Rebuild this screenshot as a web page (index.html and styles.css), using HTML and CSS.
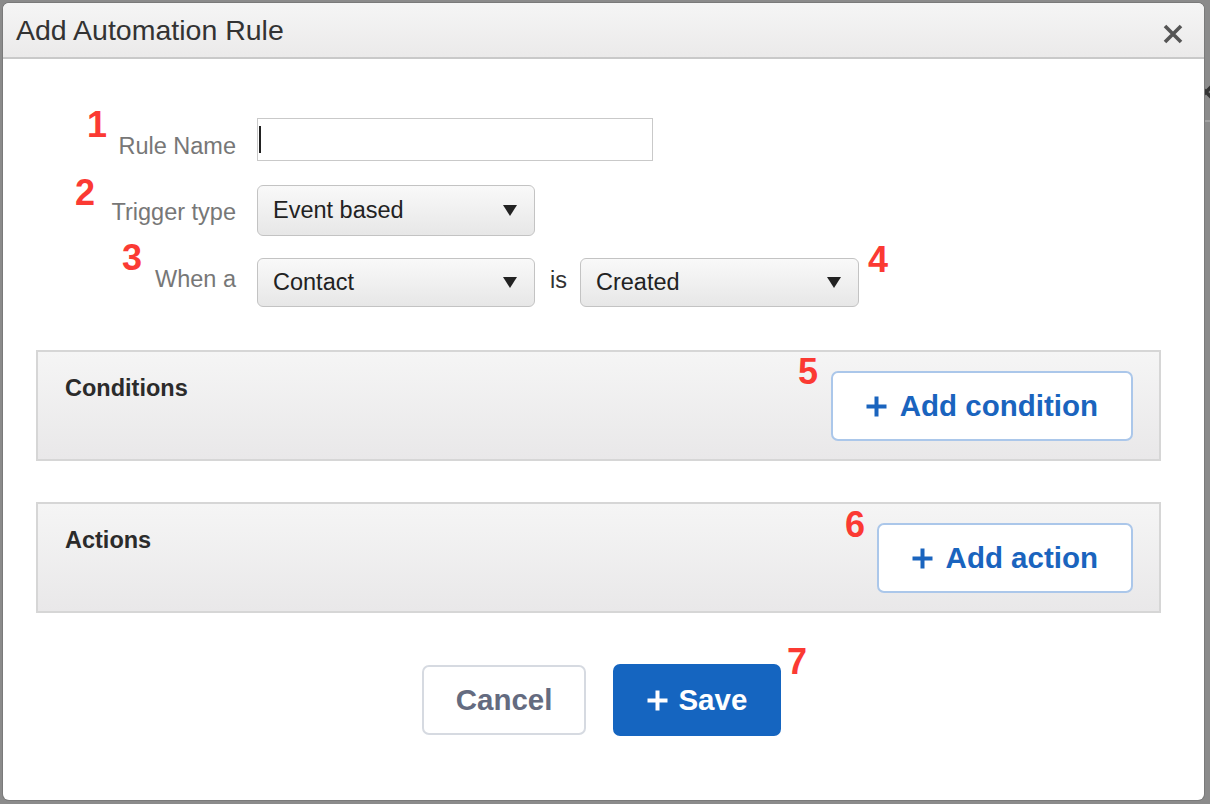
FILE: index.html
```html
<!DOCTYPE html>
<html>
<head>
	<meta charset="UTF-8">
	<title>Add Automation Rule</title>
	<link rel="stylesheet" href="styles.css">
</head>
<body>
<div class="backdrop">
	<svg class="backdrop-close" width="20" height="20" viewBox="0 0 20 20"><path d="M3 3L17 17M17 3L3 17" stroke="#333" stroke-width="3.5"/></svg>
	<div class="backdrop-line"></div>
</div>

<div class="modal">
	<div class="modal-header">
		<h2 class="modal-title">Add Automation Rule</h2>
		<svg class="modal-close" width="20" height="20" viewBox="0 0 20 20"><path d="M2 2L18 18M18 2L2 18" stroke="#555" stroke-width="3.6"/></svg>
	</div>

	<div class="modal-body">
		<div class="rule-form">
			<label class="field-label row-name">Rule Name</label>
			<div class="text-input"><span class="caret"></span></div>

			<label class="field-label row-trigger">Trigger type</label>
			<div class="select select-trigger"><span>Event based</span><i class="arrow"></i></div>

			<label class="field-label row-when">When a</label>
			<div class="when-row">
				<div class="select select-object"><span>Contact</span><i class="arrow"></i></div>
				<span class="is">is</span>
				<div class="select select-event"><span>Created</span><i class="arrow"></i></div>
			</div>
		</div>

		<div class="panel">
			<div class="panel-title">Conditions</div>
			<button class="btn btn-outline"><svg class="plus" width="21" height="21" viewBox="0 0 21 21"><path d="M10.5 0.5V20.5M0.5 10.5H20.5" stroke="currentColor" stroke-width="4"/></svg>Add condition</button>
		</div>

		<div class="panel">
			<div class="panel-title">Actions</div>
			<button class="btn btn-outline"><svg class="plus" width="21" height="21" viewBox="0 0 21 21"><path d="M10.5 0.5V20.5M0.5 10.5H20.5" stroke="currentColor" stroke-width="4"/></svg>Add action</button>
		</div>

		<div class="modal-footer">
			<button class="btn btn-cancel">Cancel</button>
			<button class="btn btn-save"><svg class="plus" width="21" height="21" viewBox="0 0 21 21"><path d="M10.5 0.5V20.5M0.5 10.5H20.5" stroke="currentColor" stroke-width="4"/></svg>Save</button>
		</div>
	</div>

	<!-- annotation numbers -->
	<span class="mark mark1">1</span>
	<span class="mark mark2">2</span>
	<span class="mark mark3">3</span>
	<span class="mark mark4">4</span>
	<span class="mark mark5">5</span>
	<span class="mark mark6">6</span>
	<span class="mark mark7">7</span>
</div>
</body>
</html>
```

FILE: styles.css
```css
*{margin: 0;padding: 0;box-sizing: border-box;}
body{background: #8b8b8b;font-family: "Liberation Sans", Arial, sans-serif;width: 1210px;height: 804px;overflow: hidden;position: relative;}

.backdrop-close{position: absolute;left: 1196px;top: 82px;}
.backdrop-line{position: absolute;left: 1200px;top: 120px;width: 10px;height: 2px;background: #a2a2a2;}

.modal{position: relative;z-index: 1;margin: 3px 0 0 3px;width: 1201px;height: 797px;background: #fff;border-radius: 6px;overflow: hidden;box-shadow: 0 0 0 1px #7a7a7a;}

.modal-header{height: 56px;display: flex;align-items: center;justify-content: space-between;padding: 0 21px 0 13px;background: linear-gradient(#f5f5f5, #ebeaea);border-bottom: 2px solid #c9c9c9;}
.modal-title{font-size: 28.5px;line-height: 1;font-weight: 400;color: #333;}
.modal-close{margin-top: 7px;}

.modal-body{padding-top: 59px;}

.rule-form{display: grid;grid-template-columns: 233px auto;column-gap: 21px;align-items: start;justify-content: start;}
.field-label{font-size: 23.5px;line-height: 23.5px;color: #777;text-align: right;}
.row-name{padding-top: 17px;}
.row-trigger{padding-top: 16px;margin-top: 24px;}
.row-when{padding-top: 10px;margin-top: 22px;}

.text-input{width: 396px;height: 43px;border: 1px solid #c9c9c9;display: flex;align-items: center;}
.caret{width: 2px;height: 27px;background: #222;margin-left: 1px;}

.select{display: flex;align-items: center;justify-content: space-between;padding: 0 17px 0 15px;border: 1px solid #c3c3c3;border-radius: 6px;background: linear-gradient(#f9f9f9, #e7e7e7);font-size: 23.5px;color: #222;}
.select-trigger{width: 278px;height: 51px;margin-top: 24px;}
.when-row{display: flex;align-items: center;margin-top: 22px;}
.select-object{width: 278px;height: 49px;}
.select-event{width: 279px;height: 49px;}
.is{font-size: 23.5px;color: #333;margin: 0 13px 0 15px;position: relative;top: -2px;}
.arrow{width: 0;height: 0;border-left: 7.5px solid transparent;border-right: 7.5px solid transparent;border-top: 11px solid #222;}

.panel{margin: 43px 43px 0 33px;display: flex;justify-content: space-between;align-items: flex-start;padding: 19px 26px 18px 27px;border: 2px solid #d6d6d6;background: linear-gradient(#f5f5f5, #e9e8e9);}
.panel + .panel{margin-top: 41px;}
.panel-title{margin-top: 6px;font-size: 23.5px;line-height: 1;font-weight: 700;color: #2b2b2b;}

.btn{display: flex;align-items: center;height: 70px;padding: 0 33px;border: 2px solid transparent;border-radius: 7px;font-family: "Liberation Sans", Arial, sans-serif;font-size: 29.5px;line-height: 1;font-weight: 700;background: #fff;cursor: pointer;}
.plus{margin-right: 13px;flex: none;}
.btn-outline{border-color: #abc7ea;color: #1a64be;}

.modal-footer{display: flex;justify-content: center;align-items: center;gap: 27px;margin-top: 51px;padding-right: 4px;}
.btn-cancel{padding: 0 32px;border-color: #d6dae1;color: #646b80;}
.btn-save{height: 72px;padding: 0 32px;background: #1565c0;border-color: #1565c0;color: #fff;}
.btn-save .plus{margin-right: 10px;}

.mark{position: absolute;font-size: 36px;line-height: 1;font-weight: 700;color: #fb3a33;}
.mark1{left: 84px;top: 104px;}
.mark2{left: 72px;top: 172px;}
.mark3{left: 119px;top: 237px;}
.mark4{left: 865px;top: 239px;}
.mark5{left: 795px;top: 351px;}
.mark6{left: 842px;top: 504px;}
.mark7{left: 784px;top: 641px;}
```
